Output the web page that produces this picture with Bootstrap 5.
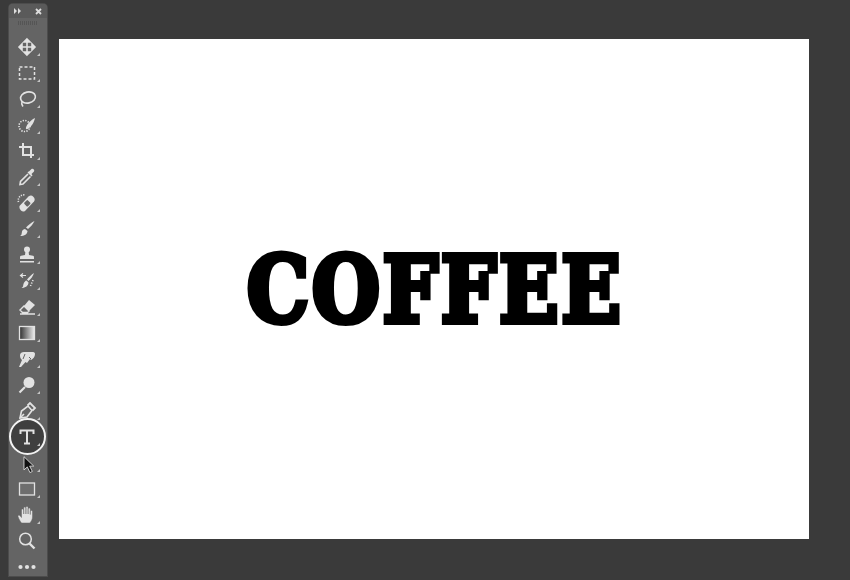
<!DOCTYPE html>
<html lang="en"><head><meta charset="utf-8"><title>Coffee</title>
<link href="https://cdn.jsdelivr.net/npm/bootstrap@5.3.0/dist/css/bootstrap.min.css" rel="stylesheet">
<style>
html,body{height:580px;overflow:hidden}
body{background:#3a3a3a}
.stage{height:580px;padding:4px 0 4px 9px;gap:12px}
.toolbox{width:38px;height:572px;background:#646464;border-radius:4px 4px 0 0;box-shadow:0 0 0 1px #4c4c4c}
.boxhead{height:14px;background:#5a5a5a;border-radius:4px 4px 0 0;padding:0 5px}
.grip{height:16px;margin:0 9px;background:repeating-linear-gradient(90deg,#555 0 1px,#646464 1px 2px);background-size:100% 4px;background-repeat:no-repeat;background-position:center 3px}
.toolbtn{height:26px;flex:none;padding-right:2px}
.toolbtn.tail{height:22px;padding-bottom:0;align-items:flex-start!important;padding-top:3px}
.toolbtn svg.ico{width:20px;height:20px;fill:none;stroke:#e2e2e2;stroke-width:1.6}
.corner{position:absolute;left:28px;top:19px;width:0;height:0;border-style:solid;border-width:0 0 3px 3px;border-color:transparent transparent #c4c4c4 transparent}
.picked{position:absolute;left:0;top:-6px;width:37px;height:37px;border:2px solid #f2f2f2;border-radius:50%;background:#3f3f3f}
.pointer{position:absolute;left:14px;top:6px;width:12px;height:18px}
.artboard{width:750px;height:500px;background:#fff;margin-top:35px}
.headline{font-family:"DejaVu Serif","Liberation Serif",serif;font-weight:700;font-size:92px;line-height:1;color:#000;-webkit-text-stroke:6px #000;letter-spacing:3px;transform:scaleX(.852);margin:2px 0 0 3px}
</style></head><body>
<div class="stage d-flex align-items-start">
 <div class="toolbox d-flex flex-column">
  <div class="boxhead d-flex justify-content-between align-items-center">
   <svg width="8" height="6" viewBox="0 0 8 6"><path d="M0 0l3 3-3 3zM4 0l3 3-3 3z" fill="#ddd"/></svg>
   <svg width="7" height="7" viewBox="0 0 7 7"><path d="M1 1l5 5M6 1l-5 5" stroke="#ddd" stroke-width="1.8"/></svg>
  </div>
  <div class="grip"></div>
  <div class="toolbtn position-relative d-flex align-items-center justify-content-center"><svg class="ico" viewBox="0 0 20 20"><path d="M10 3v14M3 10h14" stroke-width="1.6"/><path d="M10 2l3 3H7zM10 18l3-3H7zM2 10l3-3v6zM18 10l-3-3v6z" fill="#e2e2e2"/></svg><span class="corner"></span></div>
  <div class="toolbtn position-relative d-flex align-items-center justify-content-center"><svg class="ico" viewBox="0 0 20 20"><rect x="2.500" y="4" width="15" height="12" stroke-dasharray="3 2" stroke-width="1.500"/></svg><span class="corner"></span></div>
  <div class="toolbtn position-relative d-flex align-items-center justify-content-center"><svg class="ico" viewBox="0 0 20 20"><ellipse cx="11" cy="8.500" rx="7.500" ry="5.500" transform="rotate(-12 11 8.500)"/><path d="M5 13c-1 2 0 3 1 4.500"/></svg><span class="corner"></span></div>
  <div class="toolbtn position-relative d-flex align-items-center justify-content-center"><svg class="ico" viewBox="0 0 20 20"><circle cx="7.500" cy="11" r="5.500" stroke-dasharray="1.300 1.300"/><path d="M18 3c-1 5-4 9-7.500 11-1 .5-2 0-1.500-1.500C10 9 14 5 18 3z" fill="#e2e2e2" stroke="none"/></svg><span class="corner"></span></div>
  <div class="toolbtn position-relative d-flex align-items-center justify-content-center"><svg class="ico" viewBox="0 0 20 20"><path d="M6 2v12h11M2 6h12v11" stroke-width="2"/></svg><span class="corner"></span></div>
  <div class="toolbtn position-relative d-flex align-items-center justify-content-center"><svg class="ico" viewBox="0 0 20 20"><path d="M11 7l-7.500 7.500L3 17.500l3-.5L13.500 9.500"/><path d="M10.500 5.500l4 4 1-1-1-1.500 2.500-2.500c1-1.500-1-3.500-2.500-2.500L12 4.500 11.500 4.500z" fill="#e2e2e2" stroke="none"/></svg><span class="corner"></span></div>
  <div class="toolbtn position-relative d-flex align-items-center justify-content-center"><svg class="ico" viewBox="0 0 20 20"><path d="M2.500 13l9-9.500c2-1.500 3.500-1 4.800.2s2 3 .7 4.800L8 18c-1.500 1-3 .5-4-.5s-2-2.800-1.500-4.500z" fill="#e2e2e2" stroke="none"/><rect x="7.800" y="7.800" width="5" height="5" rx="1" transform="rotate(45 10.300 10.300)" fill="#646464" stroke="none"/><path d="M1.500 9a5.500 5.500 0 0 1 6.500-7" stroke-dasharray="1.200 1.200"/></svg><span class="corner"></span></div>
  <div class="toolbtn position-relative d-flex align-items-center justify-content-center"><svg class="ico" viewBox="0 0 20 20"><path d="M17.500 2c-1.500 3-4 6-6.500 8l-2-1.500C11 6 14.500 3.500 17.500 2z" fill="#e2e2e2" stroke="none"/><path d="M8 10l2.500 2c0 3-3 5-7.500 5 2-1 1.500-2.500 2-4.500.3-1.200 1.800-2.500 3-2.500z" fill="#e2e2e2" stroke="none"/></svg><span class="corner"></span></div>
  <div class="toolbtn position-relative d-flex align-items-center justify-content-center"><svg class="ico" viewBox="0 0 20 20"><circle cx="10" cy="4.500" r="3" fill="#e2e2e2" stroke="none"/><path d="M8.500 6h3l.5 4 4 .8c1 .2 1 1 1 3.200H3c0-2.200 0-3 1-3.200l4-.8zM3 16h14v1.500H3z" fill="#e2e2e2" stroke="none"/></svg><span class="corner"></span></div>
  <div class="toolbtn position-relative d-flex align-items-center justify-content-center"><svg class="ico" viewBox="0 0 20 20"><path d="M17 2c-1 3-3 6-5.500 8L10 8.500C12 6 14.500 3.500 17 2z" fill="#e2e2e2" stroke="none"/><path d="M9.500 9.500l2 2c0 3-3 5.500-7 5.500 2-1 1.500-2.500 2-4 .4-1.500 2-3.500 3-3.500z" fill="#e2e2e2" stroke="none"/><path d="M9 4.500H3.500M6 2.500l-2.500 2 2.500 2" stroke-width="1.200"/><path d="M16 9l-2.500 6" stroke-dasharray="1.200 1.500"/></svg><span class="corner"></span></div>
  <div class="toolbtn position-relative d-flex align-items-center justify-content-center"><svg class="ico" viewBox="0 0 20 20"><path d="M12 3l6 5-6 6-5-5z" fill="#e2e2e2" stroke="none"/><path d="M7 9l5 5-1.500 1.500H5.500L3 13zM3 17h15" stroke-width="1.400"/></svg><span class="corner"></span></div>
  <div class="toolbtn position-relative d-flex align-items-center justify-content-center"><svg class="ico" viewBox="0 0 20 20"><defs><linearGradient id="gr"><stop offset="0" stop-color="#2e2e2e"/><stop offset="1" stop-color="#eee"/></linearGradient></defs><rect x="2.500" y="3.500" width="15" height="13" fill="url(#gr)" stroke-width="1.300"/></svg><span class="corner"></span></div>
  <div class="toolbtn position-relative d-flex align-items-center justify-content-center"><svg class="ico" viewBox="0 0 20 20"><path d="M3 6c0-2 2-3 4-3h9c1.500 0 2 1 2 2 0 3-2 5-4 6l-1-1-3 4-1.500-1L4 18H2l3-7c-1.500-1-2-3-2-5z" fill="#e2e2e2" stroke="none"/><path d="M8 5l-2 5M14 10l-2-2" stroke="#646464" stroke-width="1"/></svg><span class="corner"></span></div>
  <div class="toolbtn position-relative d-flex align-items-center justify-content-center"><svg class="ico" viewBox="0 0 20 20"><circle cx="12" cy="7.500" r="5.500" fill="#e2e2e2" stroke="none"/><path d="M8 12l-5.500 5.500" stroke-width="2.200"/></svg><span class="corner"></span></div>
  <div class="toolbtn position-relative d-flex align-items-center justify-content-center"><svg class="ico" viewBox="0 0 20 20"><path d="M3 17l1.500-7L11 5l4 4.500-5 6.500z"/><path d="M10.500 4.500L13 2l5 5-2.500 2.500" stroke-width="1.800"/><path d="M3 17l4-4"/></svg><span class="corner"></span></div>
  <div class="toolbtn position-relative d-flex align-items-center justify-content-center"><span class="picked"></span><svg class="ico position-relative" viewBox="0 0 20 20"><path d="M3.500 7V3.500h13V7M10 3.500v13M7 16.500h6" stroke-width="2"/></svg><span class="corner"></span></div>
  <div class="toolbtn position-relative d-flex align-items-center justify-content-center"><svg class="pointer" viewBox="0 0 12 19"><path d="M.7.7v14l3.500-3.200L7 17.500l2.500-1.200-2.800-5.600H11z" fill="#111" stroke="#e2e2e2" stroke-width=".9"/></svg><span class="corner"></span></div>
  <div class="toolbtn position-relative d-flex align-items-center justify-content-center"><svg class="ico" viewBox="0 0 20 20"><rect x="2.500" y="4" width="15" height="12" fill="#6e6e6e" stroke-width="1.300"/></svg><span class="corner"></span></div>
  <div class="toolbtn position-relative d-flex align-items-center justify-content-center"><svg class="ico" viewBox="0 0 20 20"><path d="M4.500 18C3 16 1.500 13.500 1 11.500c-.3-1.200 1.200-1.800 2-.8l1.500 1.800V5c0-1.500 2.200-1.500 2.200 0v4V3c0-1.500 2.200-1.500 2.200 0v6V2.500c0-1.500 2.200-1.500 2.200 0V9V4c0-1.500 2.200-1.500 2.200 0v5.500-3c0-1.500 2.200-1.500 2.200 0V12c0 2.500-1.500 4.500-2.500 6z" fill="#e2e2e2" stroke="#646464" stroke-width=".5"/></svg><span class="corner"></span></div>
  <div class="toolbtn position-relative d-flex align-items-center justify-content-center"><svg class="ico" viewBox="0 0 20 20"><circle cx="8.500" cy="8" r="5.800" stroke-width="1.500"/><path d="M12.500 12.500l5 5" stroke-width="2.400"/></svg></div>
  <div class="toolbtn tail position-relative d-flex justify-content-center"><svg class="ico" viewBox="0 0 20 20"><circle cx="3.500" cy="10" r="2.100" fill="#e2e2e2" stroke="none"/><circle cx="10" cy="10" r="2.100" fill="#e2e2e2" stroke="none"/><circle cx="16.500" cy="10" r="2.100" fill="#e2e2e2" stroke="none"/></svg></div>
 </div>
 <main class="artboard d-flex align-items-center justify-content-center"><div class="headline">COFFEE</div></main>
</div>
<script src="https://cdn.jsdelivr.net/npm/bootstrap@5.3.0/dist/js/bootstrap.bundle.min.js"></script>
</body></html>
